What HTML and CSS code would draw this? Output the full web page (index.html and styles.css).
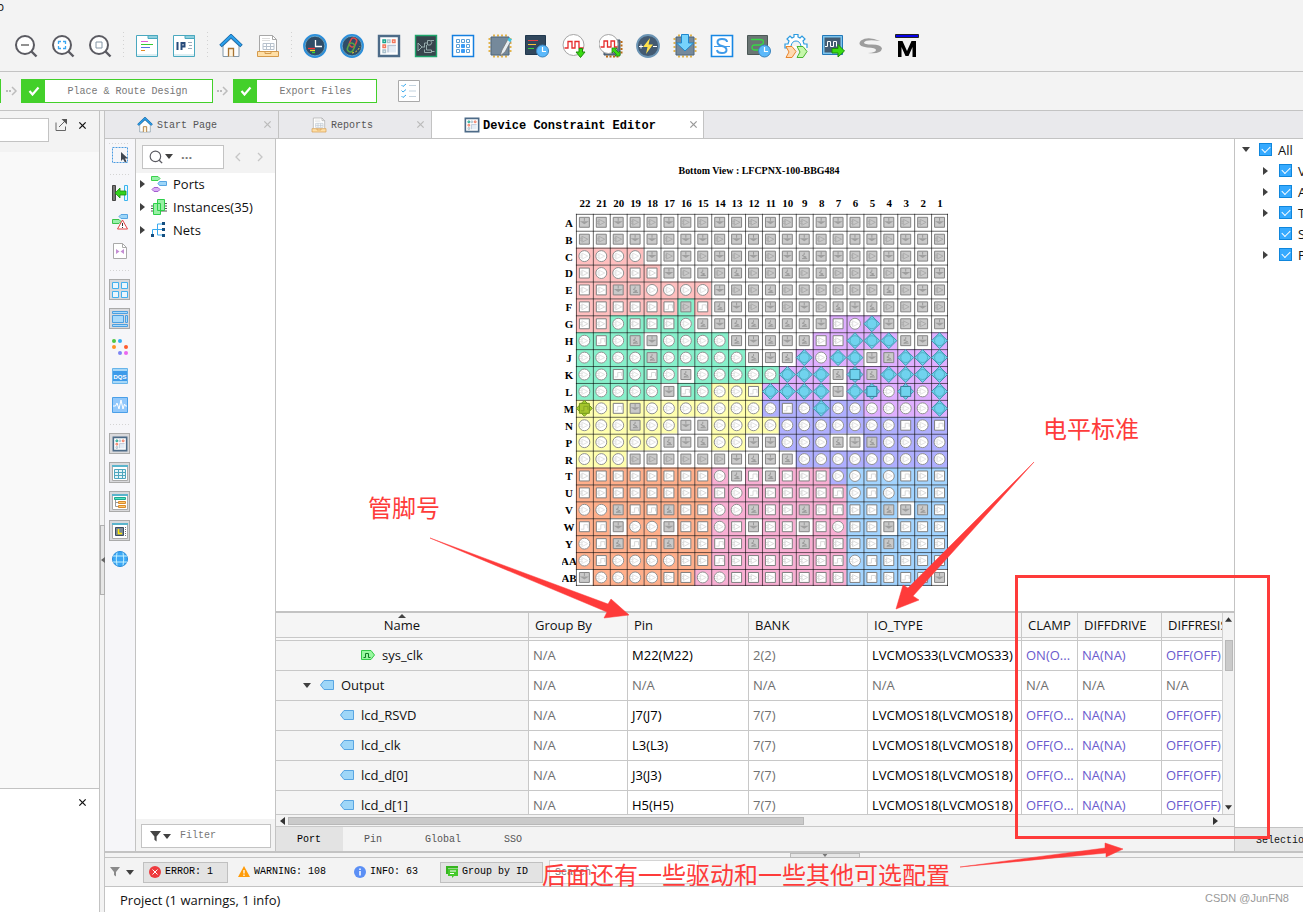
FILE: index.html
```html
<!DOCTYPE html>
<html lang="en">
<head>
<meta charset="utf-8">
<title>Device Constraint Editor</title>
<link rel="stylesheet" href="styles.css">
</head>
<body>
<svg class="defs" aria-hidden="true">
  <symbol id="i-home" viewBox="0 0 24 24"><path d="M4 12v10.500h16V12l-8-7.500z" fill="#fdfdfd" stroke="#8398a8"/><path d="M9.500 22.500v-8h5v8" fill="#fff3dc" stroke="#a87434" stroke-width="1.300"/><path d="M1.500 12 12 2l10.500 10" fill="none" stroke="#1565a5" stroke-width="3.600"/><path d="M2 11.500 12 2l10 9.500" fill="none" stroke="#2da1ec" stroke-width="2"/></symbol>
  <symbol id="i-report" viewBox="0 0 24 24"><path d="M3.500 17V1.500h13l4 4V17" fill="#fff" stroke="#a7a7a7"/><path d="M16.500 1.500v4h4" fill="none" stroke="#a7a7a7"/><path d="M6 4.500h8M6 6.500h8" stroke="#ddd"/><path d="M7 9.500h11v6H7zM7 12.500h11M10.500 9.500v6M14.500 9.500v6" fill="none" stroke="#b8c2cd"/><path d="M1.500 17.500h21v5h-21z" fill="#ffdfa6" stroke="#d49a4c"/><path d="M9 17.500v2h6v-2" fill="none" stroke="#d49a4c"/></symbol>
  <symbol id="i-dce" viewBox="0 0 24 24"><path d="M2 2h20v20H2z" fill="#fff" stroke="#4d6b88" stroke-width="2.400"/><g fill="#fff" stroke-width="1.400"><path d="M6 6h2.500v2.500H6z" stroke="#16a58f"/><path d="M10.500 6H13v2.500h-2.500z" stroke="#a9c0cc"/><path d="M15.500 6H18v2.500h-2.500zM6 11h2.500v2.500H6z" stroke="#f2765b"/><path d="M6 16h2.500v2.500H6z" stroke="#a9c0cc"/></g><path d="M11 18.500V11.500h8" fill="#e8eef5" stroke="#b7c3d4" stroke-width="1.400"/><path d="M12 12.500h7v6h-7z" fill="#e4ecf5"/></symbol>
  <symbol id="i-out" viewBox="0 0 14 11"><path d="M4 .500h9.500v9H4l-3.500-4.500z" fill="#9ed6f8" stroke="#58a5e2"/></symbol>
  <symbol id="i-x" viewBox="0 0 10 10"><path d="M1.500 1.500l7 7m0-7l-7 7" fill="none" stroke="currentColor" stroke-width="1.400"/></symbol>
  <symbol id="i-right" viewBox="0 0 5 8"><path d="M0 0l5 4-5 4z" fill="#404040"/></symbol>
  <symbol id="i-down" viewBox="0 0 8 5"><path d="M0 0h8L4 5z" fill="#404040"/></symbol>
  <symbol id="i-funnel" viewBox="0 0 10 10"><path d="M0 0h10L6 5v4.500L4 8V5z" fill="currentColor"/></symbol>
  <symbol id="i-next" viewBox="0 0 12 10"><path d="M0 4h2v2H0zM3 4h2v2H3z" fill="#bcbcbc"/><path d="M6 1l4 4-4 4" fill="none" stroke="#bcbcbc" stroke-width="1.500"/></symbol>
  <symbol id="i-mag" viewBox="0 0 24 24"><circle cx="11" cy="11" r="9" fill="#fff" stroke="#5b5b62" stroke-width="2"/><path d="M17.500 17.500l5 5" stroke="#5b5b62" stroke-width="2.400"/></symbol>
</svg>
<div class="app">
  <div class="menu-edge">p</div>
  <div class="toolbar">
    <button aria-label="Zoom out"><svg viewBox="0 0 24 24"><use href="#i-mag"/><path d="M7 11h8" stroke="#555" stroke-width="1.300"/></svg></button>
    <button aria-label="Zoom fit"><svg viewBox="0 0 24 24"><use href="#i-mag"/><path d="M7.500 10V7.500H10M12 7.500h2.500V10M14.500 12v2.500H12M10 14.500H7.500V12" fill="none" stroke="#39a7f2" stroke-width="1.300"/></svg></button>
    <button aria-label="Zoom area"><svg viewBox="0 0 24 24"><use href="#i-mag"/><path d="M8 8h6v6H8z" fill="none" stroke="#8496a6"/></svg></button>
    <i class="bar-sep"></i>
    <button aria-label="Source template"><svg viewBox="0 0 24 24"><path d="M1.500 1.500h21v21h-21z" fill="#fff" stroke="#4aa8bf"/><path d="M13 1.500h9.500v3H13z" fill="#8fd0de" stroke="#4aa8bf"/><path d="M6 7.500h7" stroke="#e35bd9"/><path d="M6 10.500h12" stroke="#35c935"/><path d="M6 13.500h9" stroke="#5177e2"/><path d="M6 16.500h4" stroke="#e58a23"/><path d="M2 21h20" stroke="#b9dfe7"/></svg></button>
    <button aria-label="IP catalog"><svg viewBox="0 0 24 24"><path d="M1.500 1.500h21v21h-21z" fill="#fff" stroke="#4aa8bf"/><path d="M13 1.500h9.500v3H13z" fill="#8fd0de" stroke="#4aa8bf"/><path d="M5.500 8v8M9.500 16V9h3v3.500h-3" fill="none" stroke="#274b7a" stroke-width="2"/><path d="M16 8.500h4M17 11.500h3M16 14.500h4" stroke="#9aabbb"/><path d="M2 21h20" stroke="#b9dfe7"/></svg></button>
    <i class="bar-sep"></i>
    <button aria-label="Start page"><svg><use href="#i-home"/></svg></button>
    <button aria-label="Reports"><svg><use href="#i-report"/></svg></button>
    <i class="bar-sep"></i>
    <button aria-label="Timing constraint"><svg viewBox="0 0 24 24"><circle cx="12" cy="12" r="11" fill="#2f4d68" stroke="#2c8fdb" stroke-width="1.800"/><circle cx="12" cy="12" r="9.800" fill="none" stroke="#7fd0f5" stroke-width=".6"/><path d="M12.500 6v6.500H19" fill="none" stroke="#fff" stroke-width="1.300"/><path d="M5 14.500h7" stroke="#f33" stroke-width="1.300"/><path d="M7 16.500h5" stroke="#fd2" stroke-width="1.300"/><path d="M9 18.500h3" stroke="#3d3" stroke-width="1.300"/></svg></button>
    <button aria-label="Timing analysis"><svg viewBox="0 0 24 24"><circle cx="12" cy="12" r="11" fill="#2f4d68" stroke="#2c8fdb" stroke-width="1.800"/><circle cx="12" cy="12" r="9.800" fill="none" stroke="#7fd0f5" stroke-width=".6"/><g fill="none"><rect x="10" y="4" width="6" height="9" rx="3" transform="rotate(25 13 8.500)" stroke="#e34848" stroke-width="1.500"/><rect x="8" y="9" width="6" height="9" rx="3" transform="rotate(25 11 13.500)" stroke="#59a544" stroke-width="1.500"/><path d="M12 19q6-1 8-7" stroke="#f2d12f" stroke-dasharray="2 1.500"/></g></svg></button>
    <button aria-label="Device constraint editor"><svg><use href="#i-dce"/></svg></button>
    <button aria-label="Netlist analyzer"><svg viewBox="0 0 24 24"><path d="M1.500 1.500h21v21h-21z" fill="#38454d" stroke="#1fa56c" stroke-width="1.400"/><path d="M4 9l4 4-4 4zM8 13h3M10.500 13V9h3M13.500 6.500h3q2.500 2 0 4.500h-3zM17 6.500h3M12.500 11v5h5v2.500h-7v-3M17.500 17.500h3" fill="none" stroke="#9fb5b5" stroke-width=".9"/></svg></button>
    <button aria-label="Physical designer"><svg viewBox="0 0 24 24"><path d="M1.500 1.500h21v21h-21z" fill="#fff" stroke="#147fe0" stroke-width="1.500"/><g fill="#fff" stroke="#5c9fd6"><path d="M5.500 5.500h3v3h-3zM10.500 5.500h3v3h-3zM15.500 5.500h3v3h-3zM5.500 10.500h3v3h-3zM15.500 10.500h3v3h-3zM5.500 15.500h3v3h-3zM15.500 15.500h3v3h-3z"/><path d="M10.500 10.500h3v3h-3zM10.500 15.500h3v3h-3z" fill="#3c9cf5" stroke="#3c9cf5"/></g></svg></button>
    <button aria-label="ECO editor"><svg viewBox="0 0 24 24"><path d="M5 1.500h16M5 22.500h16" stroke="#e3b44c" stroke-width="2" stroke-dasharray="2 2"/><path d="M1.500 4v16M22.500 4v16" stroke="#e3b44c" stroke-width="2" stroke-dasharray="2 2"/><path d="M3 3h18v18H3z" fill="#75899b" stroke="#4e6478"/><path d="M12 22l2-6L20 5l3 2-6 11z" fill="#e7eef2" stroke="#777" stroke-width=".8"/><path d="M19.500 6l1.500-2.500 3 2L22 8z" fill="#36c9e8"/></svg></button>
    <button aria-label="Device timing"><svg viewBox="0 0 24 24"><path d="M.5 1.500h20v19H.5z" fill="#31475c" stroke="#20384e"/><path d="M3 6.500h10" stroke="#e63f3f"/><path d="M3 10.500h8" stroke="#f5c33a"/><path d="M3 14.500h6" stroke="#3bd23b"/><circle cx="17.500" cy="17" r="6" fill="#5bb9fb" stroke="#3a83bd"/><path d="M17.500 13v4.500H21" fill="none" stroke="#fff" stroke-width="1.200"/></svg></button>
    <button aria-label="Reveal inserter"><svg viewBox="0 0 24 24"><circle cx="11.500" cy="11" r="10.500" fill="#fff" stroke="#a5a5a5"/><path d="M2.500 14H6V7.500h4V14h3V7.500h4V14h4.500" fill="none" stroke="#e62c2c" stroke-width="1.300"/><path d="M17 14.500h3.500V18H23l-4.500 5.500L14 18h3z" fill="#3adb12" stroke="#1f8a0d"/></svg></button>
    <button aria-label="Reveal analyzer"><svg viewBox="0 0 24 24"><path d="M5 6h16v15H5z" fill="#5f7488" stroke="#42576a"/><path d="M7 22.500h13M22.500 7v13" stroke="#b96b16" stroke-width="2" stroke-dasharray="2 1.500"/><circle cx="9.500" cy="10" r="9.500" fill="#fff" stroke="#a5a5a5"/><path d="M1.500 13H5V7h3.500v6H12V7h3.500v6h3" fill="none" stroke="#e62c2c" stroke-width="1.300"/><path d="M13 14h5l-1.500 1.500 3 3L21 17v5h-5l1.500-1.500-3-3L13 19z" fill="#3adb12" stroke="#1f8a0d" stroke-width=".8"/></svg></button>
    <button aria-label="Power calculator"><svg viewBox="0 0 24 24"><circle cx="12" cy="12" r="11" fill="#435a71" stroke="#6b94b4" stroke-width="1.800"/><path d="M14 4l-7 9h4.500L10 20l7-9.500h-4.500z" fill="#ffe14c"/><path d="M3 12.500h4M5 10.500v4M17 12.500h4" stroke="#fff"/></svg></button>
    <button aria-label="Programmer"><svg viewBox="0 0 24 24"><path d="M5 1.500h16M5 22.500h16" stroke="#e3b44c" stroke-width="2" stroke-dasharray="2 2"/><path d="M1.500 4v16M22.500 4v16" stroke="#e3b44c" stroke-width="2" stroke-dasharray="2 2"/><path d="M3 3h18v18H3z" fill="#75899b" stroke="#4e6478"/><path d="M8.500 .500h7V9h5L12 17 3.500 9h5z" fill="#76d3fc" stroke="#1d87cf"/></svg></button>
    <button aria-label="Synthesis"><svg viewBox="0 0 24 24"><path d="M1.500 1.500h21v21h-21z" fill="#fff" stroke="#1787e4" stroke-width="1.600"/><path d="M17 8q0-3-5-3-4.500 0-4.500 3T12 12t4.500 4-4.500 3-5-3" fill="none" stroke="#3f9be9" stroke-width="2"/><path d="M4 12.500h16" stroke="#3f9be9"/></svg></button>
    <button aria-label="Path timing"><svg viewBox="0 0 24 24"><path d="M.5 1.500h20v19H.5z" fill="#6a7573" stroke="#4c5856"/><path d="M4 5.500h9q3.500 0 3.500 2.500T13 11H8q-3 0-3 2.500T8 16h4" fill="none" stroke="#37d846" stroke-width="1.300"/><circle cx="17.500" cy="17" r="6" fill="#5bb9fb" stroke="#3a83bd"/><path d="M17.500 13v4.500H21" fill="none" stroke="#fff" stroke-width="1.200"/></svg></button>
    <button aria-label="Run manager"><svg viewBox="0 0 24 24"><path d="M4 14H1v-4h3l1-3-2-2 3-3 2 2 2-1V.500h4V3l2 1 2-2 3 3-2 2 1 3h3v4" fill="#fff" stroke="#2c9be0" stroke-width="1.200"/><path d="M7 12q1-5 5-5t5 5" fill="#f3f3f3" stroke="#2c9be0"/><path d="M2 12.500h6l4 5-4 6H2l3-5.500z" fill="#ffd9b0" stroke="#e8852d"/><path d="M13 12.500h6l4 5-4 6h-6l3-5.500z" fill="#c6f7ab" stroke="#49b530"/></svg></button>
    <button aria-label="Simulation wizard"><svg viewBox="0 0 24 24"><path d="M1.500 1.500h20v19h-20z" fill="#7cc4ee" stroke="#2378b8"/><path d="M3.500 3.500h16v15h-16z" fill="#435c72"/><path d="M4 12.500h2.500v-5h3v5h3v-5h3v5" fill="none" stroke="#fff"/><path d="M11 14.500h6v-4l6.500 6.500-6.500 6v-4h-6z" fill="#3adb12" stroke="#1f8a0d"/></svg></button>
    <button aria-label="Synplify"><svg viewBox="0 0 24 24"><path d="M22 7Q10 2 3 6.500q-5 5.500 6 7 9 0 9 2.500 0 2.500-8 3 13 1.500 14-4.500-1-4-10-4-8 0-8-2 2-3.500 16-1.500z" fill="#9d9d9d"/></svg></button>
    <button aria-label="ModelSim"><svg viewBox="0 0 24 24"><path d="M.5 .500h23v3H.5z" fill="#0600e8" stroke="#222"/><path d="M3 23V7h4.500L12 17l4.500-10H21v16h-3.500V13L13.500 22h-3L6.500 13v10z" fill="#000"/></svg></button>
  </div>
  <div class="flow">
    <span class="flow-end"></span>
    <svg class="next"><use href="#i-next"/></svg>
    <button class="step step-wide"><span class="ok"><svg viewBox="0 0 12 10"><path d="M1.500 5l3 3.500 6-7" fill="none" stroke="#fff" stroke-width="2.200"/></svg></span><span class="label">Place &amp; Route Design</span></button>
    <svg class="next"><use href="#i-next"/></svg>
    <button class="step"><span class="ok"><svg viewBox="0 0 12 10"><path d="M1.500 5l3 3.500 6-7" fill="none" stroke="#fff" stroke-width="2.200"/></svg></span><span class="label">Export Files</span></button>
    <button class="tasks" aria-label="Task detail"><svg viewBox="0 0 22 22"><path d="M.5 .500h21v21H.5z" fill="#fff" stroke="#a9a9a9"/><path d="M3.500 5l1.500 1.500L8 4M3.500 10.500L5 12l3-2.500M3.500 16L5 17.500 8 15" fill="none" stroke="#3aa9ec"/><path d="M11 5.500h7M11 11h7M11 16.500h7" stroke="#c3d3df"/></svg></button>
  </div>
  <div class="work">
    <aside class="left">
      <div class="left-head"><input aria-label="View"><button aria-label="Detach"><svg viewBox="0 0 12 12"><path d="M1 3.500V11.500h9.500V7.500" fill="none" stroke="#666"/><path d="M4 8l6-6" stroke="#666"/><path d="M6.500 0H12v5.500z" fill="#555"/></svg></button><button class="dark" aria-label="Close"><svg><use href="#i-x"/></svg></button></div>
      <div class="left-body"></div>
      <div class="left-foot"><button class="dark" aria-label="Close"><svg><use href="#i-x"/></svg></button></div>
    </aside>
    <div class="v-split"><button aria-label="Collapse"><svg viewBox="0 0 4 6"><path d="M4 0v6L0 3z" fill="#666"/></svg></button></div>
    <main class="right">
      <nav class="tabs">
        <div class="tab t1"><svg class="ico"><use href="#i-home"/></svg><span>Start Page</span><button aria-label="Close"><svg><use href="#i-x"/></svg></button></div>
        <div class="tab t2"><svg class="ico"><use href="#i-report"/></svg><span>Reports</span><button aria-label="Close"><svg><use href="#i-x"/></svg></button></div>
        <div class="tab t3 active"><svg class="ico"><use href="#i-dce"/></svg><span>Device Constraint Editor</span><button aria-label="Close"><svg><use href="#i-x"/></svg></button></div>
      </nav>
      <div class="editor">
        <div class="tools">
          <button aria-label="Select"><svg viewBox="0 0 16 16"><path d="M.5 .500h15v15H.5z" fill="none" stroke="#4a9be0" stroke-dasharray="2 1"/><path d="M9 5l7 6.500h-3l1.500 3-1.500 1-2-3.500-2 2z" fill="#3f4650"/></svg></button>
          <i></i>
          <button aria-label="Assign"><svg viewBox="0 0 16 16"><path d="M.5 .500h3v15h-3z" fill="#777" stroke="#444"/><path d="M12.500 .500h3v15h-3z" fill="#e4f6ff" stroke="#3ab4ee"/><path d="M3 8l5-5v3h6v4H8v3z" fill="#33d21c" stroke="#1b8a10" stroke-width=".8"/></svg></button>
          <button aria-label="Check rules"><svg viewBox="0 0 16 16"><path d="M9 .500h6.500v4H9L7 2.500z" fill="#9ed6f8" stroke="#58a5e2"/><path d="M.5 5.500H7l2 2-2 2H.5z" fill="#98f0aa" stroke="#3bc24b"/><path d="M10.500 6l5 9h-10z" fill="#fff" stroke="#e04343"/><path d="M10.500 9v3M10.500 13v1" stroke="#333"/></svg></button>
          <button aria-label="Mirror"><svg viewBox="0 0 16 16"><path d="M1.500 .500h9l4 4v11h-13z" fill="#fff" stroke="#aaa"/><path d="M10.500 .500v4h4" fill="none" stroke="#aaa"/><path d="M4 6l3.500 2.500L4 11zM12 6L8.500 8.500 12 11z" fill="#c48ed4"/></svg></button>
          <i></i>
          <button class="on" aria-label="Package view"><svg viewBox="0 0 16 16"><path d="M.5 .500h6v6h-6zM9.500 .500h6v6h-6zM.5 9.500h6v6h-6zM9.500 9.500h6v6h-6z" fill="#e9f6ff" stroke="#43b0ee"/></svg></button>
          <button class="on" aria-label="Device view"><svg viewBox="0 0 16 16"><path d="M.5 .500h15v2H.5zM.5 4.500h11v7H.5zM13.500 4.500h2v7h-2zM.5 13.500h15v2H.5z" fill="#a9dafb" stroke="#4b9fe0"/></svg></button>
          <button aria-label="Colors"><svg viewBox="0 0 16 16"><circle cx="2" cy="2" r="2" fill="#4cc744"/><circle cx="8" cy="2" r="2" fill="#35aef5"/><circle cx="2" cy="8" r="2" fill="#ff9326"/><circle cx="14" cy="8" r="2" fill="#ff5c2e"/><circle cx="8" cy="14" r="2" fill="#7d85f5"/><circle cx="14" cy="14" r="2" fill="#ea66ef"/></svg></button>
          <button aria-label="DQS"><svg viewBox="0 0 16 16"><path d="M.5 .500h15v15H.5z" fill="#a8d8f8" stroke="#68b4ea"/><path d="M1 3h14v10H1z" fill="#3d9bea"/><text x="8" y="11" text-anchor="middle" class="dqs">DQS</text></svg></button>
          <button aria-label="Signal"><svg viewBox="0 0 16 16"><path d="M.5 .500h15v15H.5z" fill="#92c8fb" stroke="#4b9fe8"/><path d="M1 9h2.500L5 6l2 6 2-9 2 9 1.500-5 1 2H15" fill="none" stroke="#fff"/></svg></button>
          <i></i>
          <button class="on" aria-label="Constraint view"><svg><use href="#i-dce"/></svg></button>
          <button class="on" aria-label="Grid view"><svg viewBox="0 0 16 16"><path d="M.5 .500h15v15H.5z" fill="#fff" stroke="#aaa"/><path d="M0 1h16" stroke="#5ab4cc" stroke-width="2"/><path d="M2.500 4.500h11v9h-11zM2.500 7.500h11M2.500 10.500h11M6.500 4v10M10.500 4v10" fill="#e5f4f8" stroke="#4ea6be"/></svg></button>
          <button class="on" aria-label="Tree view"><svg viewBox="0 0 16 16"><path d="M.5 .500h15v15H.5z" fill="#fff" stroke="#aaa"/><path d="M0 1h16" stroke="#5ab4cc" stroke-width="2"/><path d="M2.500 3.500h11v2h-11z" fill="#4fe5c4" stroke="#22a58f"/><path d="M6.500 7.500h7v2h-7zM6.500 11.500h7v2h-7z" fill="#ffc96b" stroke="#d98a2e"/><path d="M3.500 6v6.500H6M3.500 8.500H6" fill="none" stroke="#999"/></svg></button>
          <button class="on" aria-label="Logic view"><svg viewBox="0 0 16 16"><path d="M.5 .500h15v15H.5z" fill="#fff" stroke="#aaa"/><path d="M0 1h16" stroke="#5ab4cc" stroke-width="2"/><path d="M3.500 4.500h8v8h-8z" fill="#7a8795" stroke="#3c4c5e"/><path d="M6.500 6v4.500H10" fill="none" stroke="#ffe800" stroke-width="1.500"/><path d="M13.500 4v9" stroke="#777" stroke-dasharray="1 1"/></svg></button>
          <button aria-label="World"><svg viewBox="0 0 16 16"><circle cx="8" cy="8" r="7.500" fill="#3ca8f5" stroke="#2388d8"/><path d="M1 5h14M1 11h14M5 1.500q-1.500 6.500 0 13M11 1.500q1.500 6.500 0 13" fill="none" stroke="#c3f0ff"/></svg></button>
        </div>
        <section class="design">
          <div class="find">
            <div class="find-box"><svg class="mag"><use href="#i-mag"/></svg><svg class="caret"><use href="#i-down"/></svg><input aria-label="Find" placeholder="···"></div>
            <button aria-label="Previous"><svg viewBox="0 0 6 10"><path d="M5 1L1 5l4 4" fill="none" stroke="#c6c6c6" stroke-width="1.300"/></svg></button>
            <button aria-label="Next"><svg viewBox="0 0 6 10"><path d="M1 1l4 4-4 4" fill="none" stroke="#c6c6c6" stroke-width="1.300"/></svg></button>
          </div>
          <ul class="tree">
            <li><svg class="tw"><use href="#i-right"/></svg><svg class="ico" viewBox="0 0 16 16"><path d="M.5 .500H7l2 2-2 2H.5z" fill="#98f0aa" stroke="#3bd24b"/><path d="M8.500 5.500h7v4h-7l-1.500-2z" fill="#9ed6f8" stroke="#58a5e2"/><path d="M3 11.500h4l2 2-2 2H3l-2-2z" fill="#d9aef5" stroke="#a55dd0"/></svg>Ports</li>
            <li><svg class="tw"><use href="#i-right"/></svg><svg class="ico" viewBox="0 0 16 16"><path d="M0 7h16M0 9.500h16M0 12h16M4 4.500h12" stroke="#555"/><path d="M6.500 .500h7v11h-7zM2.500 4.500h7v11h-7z" fill="#98f0a4" stroke="#2ecf4a"/></svg>Instances(35)</li>
            <li><svg class="tw"><use href="#i-right"/></svg><svg class="ico" viewBox="0 0 16 16"><path d="M1.500 13V7.500h5M6.500 2v11M6.500 2h6M6.500 7.500h6M6.500 13h6" fill="none" stroke="#39aaf0"/><path d="M11 0h3v3h-3zM11 6h3v3h-3zM11 12h3v3h-3zM0 12h3v3H0z" fill="#144e80"/></svg>Nets</li>
          </ul>
          <div class="filter"><div class="filter-box"><svg class="fn"><use href="#i-funnel"/></svg><svg class="caret"><use href="#i-down"/></svg><input aria-label="Filter" placeholder="Filter"></div></div>
        </section>
        <section class="center">
          <div class="canvas"><svg id="chip" width="386" height="421" viewBox="0 0 388 423"></svg></div>
          <div class="sheet">
            <div class="sheet-view">
              <div class="sheet-clip">
              <table>
                <colgroup><col><col class="c99"><col class="c121"><col class="c119"><col class="c154"><col class="c56"><col class="c84"><col class="c60"></colgroup>
                <thead>
                  <tr><th class="name"><svg class="sort" viewBox="0 0 8 4"><path d="M0 4h8L4 0z" fill="#444"/></svg>Name</th><th>Group By</th><th>Pin</th><th>BANK</th><th>IO_TYPE</th><th>CLAMP</th><th>DIFFDRIVE</th><th>DIFFRESISTOR</th></tr>
                  <tr class="sliver"><td></td><td></td><td></td><td></td><td></td><td></td><td></td><td></td></tr>
                </thead>
                <tbody>
                  <tr><td class="n n-clk"><svg viewBox="0 0 14 11"><path d="M.5 .500H10l3.500 4.500L10 9.500H.5z" fill="#98f79f" stroke="#33c947"/><path d="M2.500 7.500h2v-4h3v4h2" fill="none" stroke="#117c24"/></svg>sys_clk</td><td>N/A</td><td class="k">M22(M22)</td><td>2(2)</td><td class="k">LVCMOS33(LVCMOS33)</td><td class="p">ON(O...</td><td class="p">NA(NA)</td><td class="p">OFF(OFF)</td></tr>
                  <tr><td class="n n-top"><svg class="tw"><use href="#i-down"/></svg><svg><use href="#i-out"/></svg>Output</td><td>N/A</td><td>N/A</td><td>N/A</td><td>N/A</td><td>N/A</td><td>N/A</td><td>N/A</td></tr>
                  <tr><td class="n"><svg><use href="#i-out"/></svg>lcd_RSVD</td><td>N/A</td><td class="k">J7(J7)</td><td>7(7)</td><td class="k">LVCMOS18(LVCMOS18)</td><td class="p">OFF(O...</td><td class="p">NA(NA)</td><td class="p">OFF(OFF)</td></tr>
                  <tr><td class="n"><svg><use href="#i-out"/></svg>lcd_clk</td><td>N/A</td><td class="k">L3(L3)</td><td>7(7)</td><td class="k">LVCMOS18(LVCMOS18)</td><td class="p">OFF(O...</td><td class="p">NA(NA)</td><td class="p">OFF(OFF)</td></tr>
                  <tr><td class="n"><svg><use href="#i-out"/></svg>lcd_d[0]</td><td>N/A</td><td class="k">J3(J3)</td><td>7(7)</td><td class="k">LVCMOS18(LVCMOS18)</td><td class="p">OFF(O...</td><td class="p">NA(NA)</td><td class="p">OFF(OFF)</td></tr>
                  <tr><td class="n"><svg><use href="#i-out"/></svg>lcd_d[1]</td><td>N/A</td><td class="k">H5(H5)</td><td>7(7)</td><td class="k">LVCMOS18(LVCMOS18)</td><td class="p">OFF(O...</td><td class="p">NA(NA)</td><td class="p">OFF(OFF)</td></tr>
                </tbody>
              </table>
              </div>
              <div class="v-scroll"><svg viewBox="0 0 8 5"><path d="M0 5h8L4 0z" fill="#333"/></svg><span class="thumb"></span><svg class="end" viewBox="0 0 8 5"><path d="M0 0h8L4 5z" fill="#333"/></svg></div>
            </div>
            <div class="h-scroll"><svg viewBox="0 0 5 8"><path d="M5 0v8L0 4z" fill="#333"/></svg><span class="thumb"></span><svg class="end" viewBox="0 0 5 8"><path d="M0 0v8l5-4z" fill="#333"/></svg></div>
            <div class="sheet-tabs"><button class="active">Port</button><button>Pin</button><button>Global</button><button>SSO</button></div>
          </div>
        </section>
        <aside class="layers">
          <div class="layer-list">
            <label class="top"><svg class="tw-down"><use href="#i-down"/></svg><input type="checkbox" checked>All</label>
            <label><svg class="tw"><use href="#i-right"/></svg><input type="checkbox" checked>V</label>
            <label><svg class="tw"><use href="#i-right"/></svg><input type="checkbox" checked>A</label>
            <label><svg class="tw"><use href="#i-right"/></svg><input type="checkbox" checked>T</label>
            <label><svg class="tw"></svg><input type="checkbox" checked>S</label>
            <label><svg class="tw"><use href="#i-right"/></svg><input type="checkbox" checked>P</label>
          </div>
          <button class="side-tab">Selection</button>
        </aside>
      </div>
      <div class="h-split"><button aria-label="Collapse"><svg viewBox="0 0 8 5"><path d="M0 0h8L4 5z" fill="#777"/></svg></button></div>
      <div class="log-bar">
        <svg class="fn"><use href="#i-funnel"/></svg><svg class="caret"><use href="#i-down"/></svg>
        <button class="err on"><svg viewBox="0 0 12 12"><circle cx="6" cy="6" r="6" fill="#ee3b3f"/><path d="M3.500 3.500l5 5m0-5l-5 5" stroke="#fff"/></svg>ERROR: 1</button>
        <button class="warn"><svg viewBox="0 0 12 12"><path d="M6 0l6 11H0z" fill="#ff9c0a"/><path d="M6 4v3.500M6 8.500v1.500" stroke="#fff" stroke-width="1.300"/></svg>WARNING: 108</button>
        <button class="info"><svg viewBox="0 0 12 12"><circle cx="6" cy="6" r="6" fill="#5b8ff5"/><path d="M6 2.500V4M6 5v4.500" stroke="#fff" stroke-width="1.500"/></svg>INFO: 63</button>
        <button class="group on"><svg viewBox="0 0 12 12"><path d="M0 0h12v2H2v6H0z" fill="#35b51f"/><path d="M2 2.500h10V10H8l-2 2v-2H2z" fill="#45c92b"/><path d="M4 5h6M4 7.500h4" stroke="#fff"/></svg>Group by ID</button>
        <input aria-label="Search" placeholder="Search">
      </div>
      <div class="log">Project (1 warnings, 1 info)</div>
    </main>
  </div>
  <svg class="notes" width="1303" height="912" viewBox="0 0 1303 912">
    <path d="M1016.500 576.500h252v261h-252z" fill="none" stroke="#fe3b3a" stroke-width="3"/>
    <path d="M430 538l178 66 3-5 18 16-25 3 3-6zM1034 462L908 588l-5-3-7 24 23-9-6-4zM960 867l145-19v-5l18 6-17 8v-4z" fill="#fe3b3a" stroke="#fe3b3a" stroke-width=".5"/>
    <text x="368" y="517">管脚号</text>
    <text x="1043" y="438">电平标准</text>
    <text x="542" y="884">后面还有一些驱动和一些其他可选配置</text>
  </svg>
  <div class="mark">CSDN @JunFN8</div>
</div>
<script src="chip.js"></script>
</body>
</html>
```
FILE: chip.js
```js
// Each row: label, ball shapes and bank colours for columns 22 down to 1.
// c circle, s buffer, z pulse, g ground, b grey buffer, y grey zigzag, d/q assigned, m clock
const rows = [
  ["A", "gbgbbgbbgbbgbbggbbgbbg", "WWWWWWWWWWWWWWWWWWWWWW"],
  ["B", "bbbggbggbggbggbbggbggb", "WWWWWWWWWWWWWWWWWWWWWW"],
  ["C", "ccccgbgbgbgbgyggbbgbgb", "RRRRWWWWWWWWWWWWWWWWWW"],
  ["D", "sccssgbybybbybybbybgbg", "RRRRRWWWWWWWWWWWWWWWWW"],
  ["E", "ssgyccccgbbybbbbbbybgb", "RRRRRRRRWWWWWWWWWWWWWW"],
  ["F", "ssssszbzygbgbgbygybbgb", "RRRRRRGRWWWWWWWWWWWWWW"],
  ["G", "sscssscygyyyyygscdgbbg", "RRGGGGGWWWWWWWWPPPWWWW"],
  ["H", "czcygccccygygyssdddygd", "GGGGWGGGGWWWWWPPPPPWWP"],
  ["J", "ccccycccccygydcddgyddd", "GGGGGGGGGGWWWPPPPWPPPP"],
  ["K", "cczczcycccccdddyqydddd", "GGGGGGWGGGGGPPPWPPPPPP"],
  ["L", "cccccgzccczddddgdqcqcd", "GGGGGWGGYYYPPPPWPPPPPP"],
  ["M", "mczgcccccccczcdccccccd", "YYYYYYYYYYYBBBBBBPPPPP"],
  ["N", "cccyccgyccccccccccczcz", "YYYYYYWWYYYYBBBBBBBBBB"],
  ["P", "cccccygyccggcccygycccc", "YYYYYWWWYYWWBBBWWBBBBB"],
  ["R", "cccbbbbbbgygyccccccccc", "YYYWWWWWWWWWWBBBBBBBBB"],
  ["T", "sssssssscyzyssscczczss", "OOOOOOOOKWKWKKKBLLLLLL"],
  ["U", "sssssssssczsssszczczss", "OOOOOOOOKKKKKKKKLLLLLL"],
  ["V", "ccyzzyssccyssyszssygys", "OOOOOOOOKKKKKKKKLLLWLL"],
  ["W", "zzgccgsscsgssgscssgsss", "OOWOOWOOKKWKKWKKLLWLLL"],
  ["Y", "czyzzysszsyssyzsssysss", "OOOOOOOOKKKKKKKKLLLLLL"],
  ["AA", "czccccsszsssssszczsssz", "OOOOOOOOKKKKKKKKLLLLLL"],
  ["AB", "gccccssccsssssssszszsg", "WOOOOOOKKKKKKKKKLLLLLW"]
];
const banks = {
  W: "#ffffff", R: "#ffbfbf", G: "#87f0cb", Y: "#ffffaf", P: "#dfafff",
  B: "#afafff", O: "#ffaf8b", K: "#f8afd3", L: "#a3d4ff"
};
const X0 = 14, Y0 = 49, STEP = 17;

const buffer = c => `<path d="M6 5.500v6l6-3zM4 7.500h3M4 9.500h3" fill="none" stroke="${c}"/>`;
const pulse = c => `<path d="M5 11h3V6.500h4V10" fill="none" stroke="${c}"/>`;
const zigzag = '<path d="M8.500 5v2l-2 1 4 1.500-4 1.500h5" fill="none" stroke="#9a9a9a"/>';
const ground = '<path d="M8.500 4v3" stroke="#999"/><path d="M4 7.500h9l-4.500 3z" fill="#9f9f9f"/>';
const box = (fill, line) => `<path d="M3.500 3.500h10v10h-10z" fill="${fill}" stroke="${line}"/>`;
const diamond = (fill, line) => `<path d="M8.500 .500l8 8-8 8-8-8z" fill="${fill}" stroke="${line}"/>`;
const shapes = {
  c: '<circle cx="8.500" cy="8.500" r="5.500" fill="#fff" stroke="#909090"/>' + buffer("#e4e4e4"),
  s: box("#fff", "#808080") + buffer("#dcdcdc"),
  z: box("#fff", "#808080") + pulse("#dadada"),
  g: box("#c9c9c9", "#858585") + ground,
  b: box("#c9c9c9", "#858585") + buffer("#acacac"),
  y: box("#c9c9c9", "#858585") + zigzag,
  d: diamond("#70d3ee", "#4093ad") + '<circle cx="8.500" cy="8.500" r="5" fill="#70d3ee" stroke="#55acc4"/>',
  q: diamond("#70d3ee", "#4093ad") + box("#70d3ee", "#387d96"),
  m: diamond("#a5d22c", "#74961c") + box("#a5c62c", "#74961c") + pulse("#86a523")
};

let out = '<text class="chip-title" x="198" y="9">Bottom View : LFCPNX-100-BBG484</text>';
for (let i = 0; i < 22; i++) {
  out += `<text class="chip-label" x="${X0 + i * STEP + 9}" y="42">${22 - i}</text>`;
}
rows.forEach(([label, , colours], r) => {
  const y = Y0 + r * STEP;
  out += `<text class="chip-label" x="7" y="${y + 13}">${label}</text>`;
  for (let i = 0; i < 22; i++) {
    out += `<rect x="${X0 + i * STEP}" y="${y}" width="17" height="17" fill="${banks[colours[i]]}"/>`;
  }
});
let grid = "";
for (let i = 0; i <= 22; i++) {
  const p = Math.min(i * STEP, 373);
  grid += `M${X0 + p + 0.5} ${Y0}v374M${X0} ${Y0 + p + 0.5}h374`;
}
out += `<path d="${grid}" stroke="#000" stroke-opacity=".6" fill="none"/>`;
rows.forEach(([, kinds], r) => {
  for (let i = 0; i < 22; i++) {
    out += `<g transform="translate(${X0 + i * STEP} ${Y0 + r * STEP})">${shapes[kinds[i]]}</g>`;
  }
});
document.getElementById("chip").innerHTML = out;
```
FILE: styles.css
```css
* { box-sizing: border-box; }
html, body { height: 100%; margin: 0; }
body { font: 13px/20px "Open Sans", "Noto Sans CJK SC", sans-serif; color: #111; background: #f3f3f3; overflow: hidden; }
button { border: 0; margin: 0; padding: 0; background: none; color: inherit; font: inherit; display: flex; align-items: center; justify-content: center; flex: none; }
input { font: inherit; border: 0; outline: 0; padding: 0; margin: 0; min-width: 0; background: none; }
svg { display: block; flex: none; }
.defs { display: none; }
.app { position: relative; height: 100%; display: flex; flex-direction: column; overflow: hidden; }

.menu-edge { height: 14px; width: 4px; line-height: 14px; font-size: 12px; overflow: hidden; direction: rtl; }
.toolbar { height: 58px; flex: none; display: flex; padding: 14px 0 8px 7px; border-bottom: 1px solid #c3c3c3; }
.toolbar button { width: 37px; height: 36px; }
.toolbar svg { width: 24px; height: 24px; }
.bar-sep { width: 10px; background: repeating-linear-gradient(#d2d2d2 0 1px, transparent 1px 4px) 5px 4px / 1px 28px no-repeat; }

.flow { height: 39px; flex: none; display: flex; align-items: center; border-bottom: 1px solid #c3c3c3; font: 10px/20px "Liberation Mono", monospace; }
.flow-end { width: 1px; height: 24px; background: #43d02a; }
.next { width: 12px; height: 10px; margin: 0 4px; }
.flow-end + .next { margin-left: 5px; margin-right: 3px; }
.step { width: 144px; height: 24px; border: 1px solid #43d02a; background: #fff; color: #777; align-items: stretch; }
.step-wide { width: 192px; }
.ok { width: 23px; background: #43d02a; display: flex; align-items: center; justify-content: center; }
.ok svg { width: 12px; height: 10px; }
.label { flex: 1; line-height: 24px; padding-right: 2px; }
.tasks { margin-left: 21px; }
.tasks svg { width: 22px; height: 22px; }

.work { flex: 1; min-height: 0; display: flex; }
.left { width: 100px; flex: none; display: flex; flex-direction: column; border-right: 1px solid #c3c3c3; }
.left-head { height: 41px; display: flex; align-items: flex-start; padding-top: 7px; }
.left-head input { width: 49px; height: 24px; background: #fff; border: 1px solid #c3c3c3; border-left: 0; margin-right: 6px; }
.left-head button { height: 14px; width: 12px; margin-right: 11px; }
.left-head svg { width: 12px; height: 12px; }
.left-head .dark, .left-foot .dark { width: 9px; height: 14px; margin: 0; color: #111; }
.left-head .dark svg, .left-foot .dark svg { width: 9px; height: 9px; }
.left-body { flex: 1; background: #f9f9f9; }
.left-foot { height: 124px; border-top: 1px solid #c3c3c3; background: #fff; display: flex; justify-content: flex-end; padding: 6px 12px 0 0; }

.v-split { width: 5px; flex: none; border-right: 1px solid #c3c3c3; display: flex; align-items: center; }
.v-split button { width: 5px; height: 70px; margin-top: 96px; border: 1px solid #b0b0b0; background: #e6e6e6; }
.v-split svg { width: 4px; height: 6px; }

.right { flex: 1; min-width: 0; display: flex; flex-direction: column; }
.tabs { height: 28px; flex: none; display: flex; background: #e9e9ec; border-bottom: 1px solid #c3c3c3; font: 10px/20px "Liberation Mono", monospace; }
.tab { display: flex; align-items: center; gap: 4px; padding: 0 6px 0 32px; border-right: 1px solid #c3c3c3; color: #555; }
.tab span { padding-top: 2px; }
.t1 { width: 174px; }
.t2 { width: 153px; }
.t3 { width: 272px; padding-right: 5px; }
.tab.active { background: #fff; color: #000; font-weight: bold; font-size: 12px; gap: 3px; }
.tab .ico { width: 16px; height: 16px; }
.tab button { margin-left: auto; color: #bbb; }
.tab.active button { color: #999; }
.tab button svg { width: 9px; height: 9px; }

.editor { flex: 1; min-height: 0; display: flex; border-bottom: 2px solid #c3c3c3; }
.tools { width: 31px; flex: none; padding: 5px 1px 0 0; border-right: 1px solid #c3c3c3; display: flex; flex-direction: column; align-items: center; gap: 6px; background: repeating-linear-gradient(90deg, #d4d4d4 0 1px, transparent 1px 3px) 4px 4px / 20px 1px no-repeat, #f6f6f9; }
.tools button { width: 21px; height: 23px; padding-bottom: 1px; }
.tools button.on { height: 21px; margin: 1px 0; padding: 0; background: #d9d9dc; border: 1px solid #aaa; }
.tools svg { width: 16px; height: 16px; }
.tools i { width: 20px; height: 3px; background: repeating-linear-gradient(90deg, #d4d4d4 0 1px, transparent 1px 3px) 0 1px / 20px 1px no-repeat; }
.dqs { font: bold 6px "Liberation Sans", sans-serif; fill: #fff; }

.design { width: 139px; flex: none; display: flex; flex-direction: column; background: #fff; }
.find { height: 34px; background: #f3f3f3; display: flex; align-items: center; padding: 1px 0 0 6px; }
.find-box { width: 82px; flex: none; height: 24px; display: flex; align-items: center; background: #fff; border: 1px solid #c3c3c3; padding: 0 6px; margin-right: 11px; }
.mag { width: 14px; height: 14px; margin-right: 2px; }
.caret { width: 8px; height: 5px; }
.find-box input { flex: 1; width: 0; padding-left: 8px; font-weight: bold; }
.find button { width: 6px; margin-right: 16px; }
.find button svg { width: 6px; height: 10px; }
.tree { list-style: none; margin: 0; padding: 0; flex: 1; }
.tree li { height: 23px; display: flex; align-items: center; padding: 0 0 2px 4px; }
.tw { width: 5px; height: 8px; }
.tree .ico { width: 16px; height: 16px; margin: 0 6px 0 6px; }
.filter { height: 32px; background: #f3f3f3; padding: 5px 4px 0 5px; }
.filter-box { height: 24px; display: flex; align-items: center; gap: 2px; background: #fff; border: 1px solid #c3c3c3; padding: 0 8px; font: 10px/20px "Liberation Mono", monospace; }
.fn { width: 11px; height: 11px; color: #444; }
.filter-box input { flex: 1; width: 0; padding-left: 7px; }
::placeholder { color: #777; opacity: 1; }

.center { flex: 1; min-width: 0; display: flex; flex-direction: column; border-left: 1px solid #c3c3c3; background: #fff; }
.canvas { flex: 1; min-height: 0; display: flex; align-items: center; justify-content: center; }
.chip-title, .chip-label { font-family: "Liberation Serif", serif; font-weight: bold; text-anchor: middle; fill: #000; }
.chip-title { font-size: 10px; }
.chip-label { font-size: 11px; }
.sheet { flex: none; border-top: 2px solid #c3c3c3; background: #f3f3f3; }
.sheet-view { height: 201px; display: flex; overflow: hidden; }
.sheet-clip { flex: 1; min-width: 0; overflow: hidden; }
table { width: 100%; table-layout: fixed; border-collapse: separate; border-spacing: 0; }
.c56 { width: 56px; }
.c60 { width: 60px; }
.c84 { width: 84px; }
.c99 { width: 99px; }
.c119 { width: 119px; }
.c121 { width: 121px; }
.c154 { width: 154px; }
th, td { height: 30px; padding: 0 0 0 4px; border: solid #c8c8c8; border-width: 0 1px 1px 0; text-align: left; font-weight: normal; white-space: nowrap; overflow: hidden; background: #fff; color: #707070; }
td { padding-bottom: 2px; }
th { height: 25px; padding-left: 6px; background: #f5f5f5; color: #111; line-height: 24px; }
th.name { text-align: center; padding: 0; position: relative; }
.sort { position: absolute; top: 1px; left: calc(50% - 4px); width: 8px; height: 4px; }
.sliver td { height: 3px; padding: 0; background: #f9f9f9; }
th:last-child, td:last-child { border-right-width: 0; }
td.k { color: #000; }
td.p { color: #6a5acd; }
td.n { background: #f5f5f5; color: #111; padding-left: 64px; }
td.n-clk { padding-left: 85px; }
td.n-top { padding-left: 27px; }
.n svg { display: inline-block; width: 14px; height: 11px; margin-right: 7px; vertical-align: -1px; }
.n .tw { width: 8px; height: 5px; margin-right: 9px; vertical-align: 2px; }
.v-scroll { width: 12px; flex: none; display: flex; flex-direction: column; align-items: center; padding: 4px 0; border-left: 1px solid #d0d0d0; }
.v-scroll svg { width: 7px; height: 5px; }
.v-scroll .thumb { width: 8px; height: 31px; margin-top: 18px; background: #cacaca; border: 1px solid #b8b8b8; }
.end { margin-top: auto; }
.h-scroll { height: 13px; display: flex; align-items: center; padding: 0 16px 0 4px; border: solid #c8c8c8; border-width: 1px 0; }
.h-scroll svg { width: 5px; height: 8px; }
.h-scroll .thumb { width: 55%; height: 8px; margin-left: 3px; background: #cacaca; border: 1px solid #b8b8b8; }
.h-scroll .end { margin: 0 0 0 auto; }
.sheet-tabs { height: 24px; display: flex; font: 10px/20px "Liberation Mono", monospace; color: #555; }
.sheet-tabs button { padding: 2px 22px 0 21px; }
.sheet-tabs .active { background: #e3e3e3; color: #000; }

.layers { width: 69px; flex: none; border-left: 1px solid #c3c3c3; background: #fff; display: flex; flex-direction: column; overflow: hidden; }
.layer-list { flex: 1; }
.layer-list label { display: flex; align-items: center; height: 21px; padding-left: 28px; }
.layer-list .top { padding-left: 7px; }
.tw-down { width: 8px; height: 5px; margin-right: 9px; }
.layer-list .tw { margin-right: 11px; }
.layer-list input { appearance: none; width: 13px; height: 13px; flex: none; margin-right: 6px; border: 1px solid #0f86dc; background: #36aaff; display: flex; align-items: center; justify-content: center; }
.layer-list input::before { content: ""; width: 7px; height: 4px; margin-bottom: 2px; border: solid #fff; border-width: 0 0 1px 1px; transform: rotate(-45deg); }
.side-tab { height: 24px; border-top: 1px solid #c3c3c3; background: #e6e6e6; justify-content: flex-start; padding: 2px 0 0 21px; font: 10px/20px "Liberation Mono", monospace; color: #111; }

.h-split { height: 5px; flex: none; border-bottom: 1px solid #c3c3c3; display: flex; justify-content: center; padding-left: 242px; }
.h-split button { width: 70px; height: 5px; background: #e6e6e6; border: 1px solid #b8b8b8; }
.h-split svg { width: 6px; height: 3px; }
.log-bar { height: 29px; flex: none; display: flex; align-items: center; padding-left: 5px; border-bottom: 1px solid #c3c3c3; font: 10px/20px "Liberation Mono", monospace; color: #000; }
.log-bar .fn { width: 10px; height: 10px; color: #8a8a8a; }
.log-bar .caret { margin: 0 9px 0 6px; }
.log-bar button { height: 21px; justify-content: flex-start; gap: 4px; padding-left: 5px; line-height: 22px; }
.log-bar .on { background: #e3e3e3; border: 1px solid #c0c0c0; }
.log-bar button svg { width: 12px; height: 12px; }
.err { width: 85px; }
.warn { width: 116px; margin-left: 5px; }
.info { width: 91px; }
.group { width: 103px; }
.log-bar input { width: 150px; height: 24px; margin-left: 6px; background: #fff; border: 1px solid #d4d4d4; padding-left: 5px; color: #888; }
.log { height: 25px; flex: none; background: #fff; padding: 3px 0 0 15px; }

.notes { position: absolute; left: 0; top: 0; pointer-events: none; }
.notes text { font: 24px "Noto Sans CJK SC", sans-serif; fill: #fe3b3a; }
.mark { position: absolute; right: 14px; bottom: 4px; font: 11px/20px "Liberation Sans", sans-serif; color: #999; }
```
